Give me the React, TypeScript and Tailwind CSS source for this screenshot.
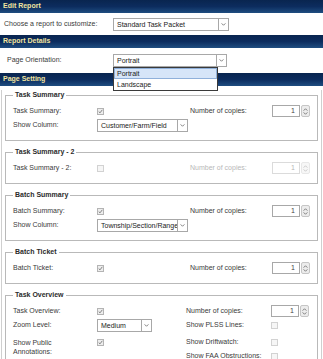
import React from 'react';

function Chevron({ up }: { up?: boolean }) {
  return (
    <svg viewBox="0 0 6 4" className="h-[3px] w-[5px]">
      <path d={up ? 'M0.5 3.5 L3 1 L5.5 3.5' : 'M0.5 0.5 L3 3 L5.5 0.5'} stroke="#5a5a5a" strokeWidth="1" fill="none" />
    </svg>
  );
}

function Bar({ title }: { title: string }) {
  return (
    <div className="flex h-[13px] items-center bg-linear-to-b from-[#09254f] via-[#0c2c5e] to-[#1f4d80] px-[3px] text-[7px] font-bold text-[#f0e4a0]">
      {title}
    </div>
  );
}

function Select({ value, w }: { value: string; w: string }) {
  return (
    <div className={`flex h-[13px] items-stretch border border-[#a8a8a8] bg-white ${w}`}>
      <span className="flex-1 overflow-hidden whitespace-nowrap pl-[3px] leading-[11px] text-[#222]">{value}</span>
      <span className="flex w-[10px] shrink-0 items-center justify-center border-l border-[#a8a8a8]">
        <Chevron />
      </span>
    </div>
  );
}

function Check({ on, off }: { on?: boolean; off?: boolean }) {
  return (
    <span className={`flex h-[7px] w-[7px] items-center justify-center border ${off ? 'border-[#d2d2d2] bg-[#f6f6f6]' : 'border-[#b4b4b4] bg-[#eeeeee]'}`}>
      {on && (
        <svg viewBox="0 0 7 7" className="h-[5px] w-[5px]">
          <path d="M1 3.6 L2.8 5.4 L6 1.2" stroke="#707070" strokeWidth="1.2" fill="none" />
        </svg>
      )}
    </span>
  );
}

function Spinner({ off }: { off?: boolean }) {
  return (
    <div className={`flex items-center gap-[1px] ${off ? 'opacity-40' : ''}`}>
      <div className="h-[12px] w-[28px] border border-[#a8a8a8] bg-white pr-[4px] text-right leading-[10px] text-[#444]">1</div>
      <div className="flex h-[12px] w-[9px] flex-col items-center justify-center gap-[1px] rounded-[2px] border border-[#c6c6c6] bg-[#ececec]">
        <Chevron up />
        <Chevron />
      </div>
    </div>
  );
}

function Group({ legend, children }: { legend: string; children: React.ReactNode }) {
  return (
    <fieldset className="mt-[6px] border border-[#b9b9b9] px-[7px] pb-[8px] pt-[4px]">
      <legend className="px-[2px] text-[7px] font-bold leading-[10px] text-[#2b2b2b]">{legend}</legend>
      {children}
    </fieldset>
  );
}

function Row({ children }: { children: React.ReactNode }) {
  return <div className="grid h-[14px] grid-cols-[84px_93px_82px_1fr] items-center whitespace-nowrap">{children}</div>;
}

function Side({ children, className = '' }: { children: React.ReactNode; className?: string }) {
  return <div className={`grid h-[14px] grid-cols-[85px_1fr] items-center whitespace-nowrap ${className}`}>{children}</div>;
}

export default function App() {
  return (
    <div className="h-[359px] w-[323px] overflow-hidden bg-white font-['Liberation_Sans',Arial,sans-serif] text-[7px] text-[#3a3a3a]">
      <Bar title="Edit Report" />
      <div className="flex h-[22px] items-center">
        <span className="w-[113px] pl-[4px]">Choose a report to customize:</span>
        <Select value="Standard Task Packet" w="w-[116px]" />
      </div>
      <Bar title="Report Details" />
      <div className="relative z-10 flex h-[25px] items-center">
        <span className="w-[113px] pl-[7px]">Page Orientation:</span>
        <div className="relative">
          <Select value="Portrait" w="w-[114px]" />
          <div className="absolute left-0 top-[13px] w-[105px] border border-[#3a3a3a] bg-white">
            <div className="h-[11px] border border-[#8fb0da] bg-[#d6e5f8] pl-[2px] leading-[9px] text-[#222]">Portrait</div>
            <div className="h-[11px] pl-[3px] leading-[11px] text-[#222]">Landscape</div>
          </div>
        </div>
      </div>
      <Bar title="Page Setting" />
      <div className="ml-[1px] mr-[1px] border-l border-r border-[#cfcfcf] px-[3px]">
        <div className="-mt-[2px]">
          <Group legend="Task Summary">
            <Row>
              <span>Task Summary:</span>
              <Check on />
              <span>Number of copies:</span>
              <Spinner />
            </Row>
            <Row>
              <span>Show Column:</span>
              <Select value="Customer/Farm/Field" w="w-[91px]" />
            </Row>
          </Group>
        </div>
        <Group legend="Task Summary - 2">
          <Row>
            <span>Task Summary - 2:</span>
            <Check off />
            <span className="text-[#b8b8b8]">Number of copies:</span>
            <Spinner off />
          </Row>
        </Group>
        <Group legend="Batch Summary">
          <Row>
            <span>Batch Summary:</span>
            <Check on />
            <span>Number of copies:</span>
            <Spinner />
          </Row>
          <Row>
            <span>Show Column:</span>
            <Select value="Township/Section/Range" w="w-[91px]" />
          </Row>
        </Group>
        <Group legend="Batch Ticket">
          <Row>
            <span>Batch Ticket:</span>
            <Check on />
            <span>Number of copies:</span>
            <Spinner />
          </Row>
        </Group>
        <Group legend="Task Overview">
          <div className="flex">
            <div className="w-[173px]">
              <div className="grid h-[14px] grid-cols-[84px_1fr] items-center">
                <span>Task Overview:</span>
                <Check on />
              </div>
              <div className="grid h-[14px] grid-cols-[84px_1fr] items-center">
                <span>Zoom Level:</span>
                <Select value="Medium" w="w-[55px]" />
              </div>
              <div className="grid grid-cols-[84px_1fr] items-start pt-[6px]">
                <span className="leading-[9px]">Show Public<br />Annotations:</span>
                <div className="pt-[1px]">
                  <Check on />
                </div>
              </div>
            </div>
            <div className="flex-1">
              <Side>
                <span>Number of copies:</span>
                <Spinner />
              </Side>
              <Side>
                <span>Show PLSS Lines:</span>
                <Check off />
              </Side>
              <Side className="mt-[3px]">
                <span>Show Driftwatch:</span>
                <Check off />
              </Side>
              <Side>
                <span>Show FAA Obstructions:</span>
                <Check off />
              </Side>
            </div>
          </div>
        </Group>
      </div>
    </div>
  );
}
